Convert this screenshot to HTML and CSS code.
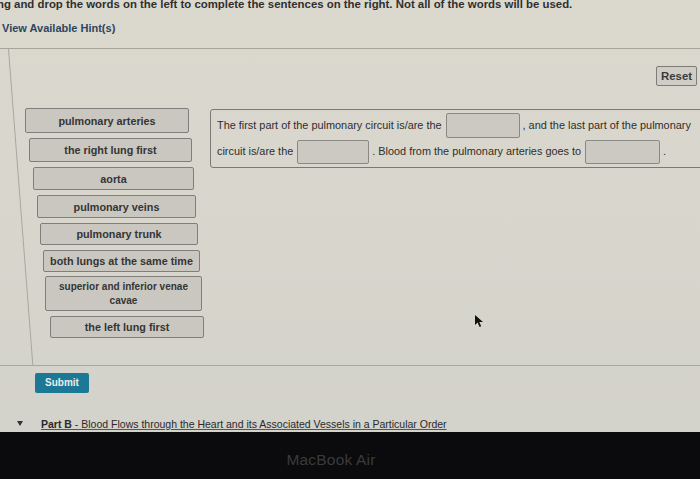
FILE: index.html
```html
<!DOCTYPE html>
<html>
<head>
<meta charset="utf-8">
<link rel="stylesheet" href="styles.css">
</head>
<body>
<div class="screen">
  <p class="instr">ng and drop the words on the left to complete the sentences on the right. Not all of the words will be used.</p>
  <p class="hint">View Available Hint(s)</p>
  <div class="panel">
    <div class="panel-edge"></div>
    <div class="reset-row"><button class="reset">Reset</button></div>
    <div class="content">
      <div class="chips">
        <div class="chip">pulmonary arteries</div>
        <div class="chip">the right lung first</div>
        <div class="chip">aorta</div>
        <div class="chip">pulmonary veins</div>
        <div class="chip">pulmonary trunk</div>
        <div class="chip">both lungs at the same time</div>
        <div class="chip tall">superior and inferior venae<br>cavae</div>
        <div class="chip">the left lung first</div>
      </div>
      <div class="sentence">
        <div class="line">The first part of the pulmonary circuit is/are the <span class="blank b1"></span> , and the last part of the pulmonary</div>
        <div class="line">circuit is/are the <span class="blank b2"></span> . Blood from the pulmonary arteries goes to <span class="blank b3"></span> .</div>
      </div>
    </div>
    <svg class="cursor" width="12" height="14" viewBox="0 0 12 14"><path d="M1 1 L1 11 L3.6 8.6 L5.6 13 L7.2 12.3 L5.3 8 L9 8 Z" fill="#111"/></svg>
  </div>
  <div class="submit-row"><button class="submit">Submit</button></div>
  <div class="partb"><span class="tri"></span><span class="pb-text"><b>Part B</b> - Blood Flows through the Heart and its Associated Vessels in a Particular Order</span></div>
</div>
<div class="bezel"><span class="brand">MacBook Air</span></div>
</body>
</html>
```
FILE: styles.css
```css
html, body {
  margin: 0;
  padding: 0;
}
body {
  width: 700px;
  height: 479px;
  overflow: hidden;
  background: #0c0c0e;
  font-family: "Liberation Sans", Arial, sans-serif;
}
.screen {
  height: 432px;
  overflow: hidden;
  background: linear-gradient(180deg, #dbd8ce 0%, #d7d5cc 60%, #d3d2cb 100%);
  position: relative;
}
.instr {
  margin: -2px 0 0 -3px;
  font-size: 11.4px;
  font-weight: bold;
  line-height: 13px;
  color: #2f2f2f;
  white-space: nowrap;
}
.hint {
  margin: 11px 0 0 2px;
  font-size: 11px;
  font-weight: bold;
  line-height: 13px;
  color: #2c4660;
}
.panel {
  margin-top: 13px;
  border-top: 1px solid #a7a59e;
  border-bottom: 1px solid #a9a79f;
  height: 316px;
  position: relative;
  overflow: hidden;
}
.panel-edge {
  position: absolute;
  left: 8px;
  top: 0;
  width: 1px;
  height: 330px;
  background: #a9a7a0;
  transform-origin: top left;
  transform: rotate(-4.4deg);
}
.reset-row {
  display: flex;
  justify-content: flex-end;
  padding: 17px 3px 0 0;
}
.reset {
  width: 41px;
  height: 20px;
  padding: 0;
  border: 1px solid #7d7c78;
  border-radius: 2px;
  background: #cfcdc6;
  font-family: "Liberation Sans", Arial, sans-serif;
  font-size: 11.4px;
  font-weight: bold;
  color: #3a3a3a;
}
.content {
  display: flex;
  align-items: flex-start;
  margin-top: 22px;
}
.chips {
  display: flex;
  flex-direction: column;
  gap: 5px;
  margin-left: 25px;
  width: 180px;
  flex: none;
}
.chip {
  box-sizing: border-box;
  width: 164px;
  height: 25px;
  display: flex;
  align-items: center;
  justify-content: center;
  text-align: center;
  background: #c9c7c0;
  border: 1px solid #7f7e7a;
  border-radius: 2px;
  font-size: 10.8px;
  font-weight: bold;
  color: #353535;
  line-height: 14px;
}
.chip:nth-child(2) { margin-left: 4px; width: 163px; height: 24px; }
.chip:nth-child(3) { margin-left: 8px; width: 161px; height: 23px; }
.chip:nth-child(4) { margin-left: 12px; width: 159px; height: 23px; }
.chip:nth-child(5) { margin-left: 15px; width: 158px; height: 22px; }
.chip:nth-child(6) { margin-left: 18px; width: 157px; height: 22px; }
.chip:nth-child(7) { margin-left: 20px; width: 157px; height: 35px; margin-top: -1px; }
.chip:nth-child(8) { margin-left: 25px; width: 154px; height: 22px; }
.chip.tall { font-size: 10px; line-height: 14px; }
.sentence {
  flex: none;
  box-sizing: border-box;
  width: 520px;
  height: 59px;
  margin-left: 5px;
  margin-top: 1px;
  padding: 3px 0 0 6px;
  border: 1px solid #7a7975;
  border-radius: 3px;
  font-size: 10.9px;
  color: #2e2e2e;
}
.line {
  height: 25px;
  line-height: 25px;
  white-space: nowrap;
  display: flex;
  align-items: center;
}
.line + .line { margin-top: 1px; }
.blank {
  display: inline-block;
  box-sizing: border-box;
  width: 74px;
  height: 25px;
  background: #ccc9c3;
  border: 1px solid #8a8985;
  border-radius: 2px;
  margin: 0 3px 0 4px;
}
.b2 { width: 72px; height: 24px; }
.b3 { width: 75px; height: 24px; }
.cursor {
  position: absolute;
  left: 474px;
  top: 265px;
}
.submit-row {
  padding: 6px 0 0 35px;
}
.submit {
  width: 54px;
  height: 20px;
  padding: 0;
  border: none;
  border-radius: 2px;
  background: #1c7895;
  color: #e8eef0;
  font-family: "Liberation Sans", Arial, sans-serif;
  font-size: 10px;
  font-weight: bold;
}
.partb {
  display: flex;
  align-items: center;
  margin-top: 25px;
  padding-left: 17px;
  font-size: 10.5px;
  color: #2a2a2a;
  white-space: nowrap;
}
.tri {
  width: 0;
  height: 0;
  border-left: 3.5px solid transparent;
  border-right: 3.5px solid transparent;
  border-top: 5px solid #333;
  margin-right: 18px;
}
.pb-text {
  text-decoration: underline;
  text-decoration-color: #555;
}
.bezel {
  height: 47px;
  background: #0b0b0d;
  display: flex;
  justify-content: center;
  align-items: center;
}
.brand {
  margin-left: -38px;
  margin-top: 8px;
  font-size: 15.5px;
  color: #3a3a3e;
  letter-spacing: 0.2px;
}
```
